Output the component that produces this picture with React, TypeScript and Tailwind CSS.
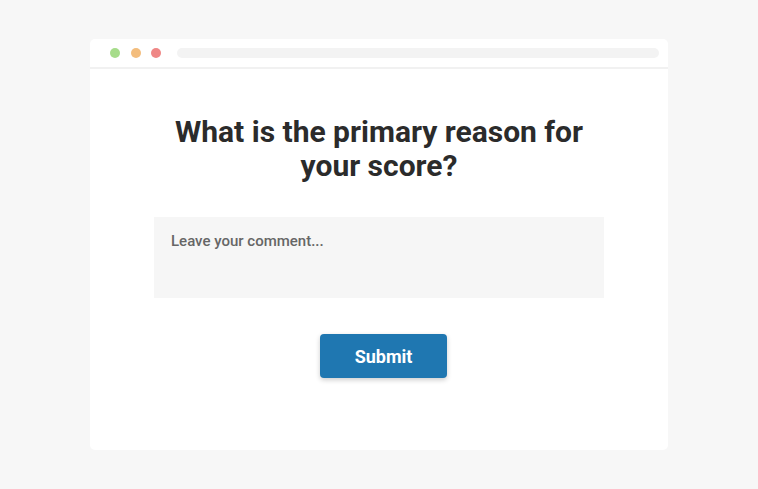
import React from "react";

export default function App() {
  return (
    <div className="w-[758px] h-[489px] bg-[#f7f7f7] pt-[39px] pl-[90px]" style={{ fontFamily: "Roboto, 'Liberation Sans', sans-serif" }}>
      <div className="w-[578px] h-[411px] bg-white rounded-[5px] flex flex-col">
        <div className="h-[30px] border-b-2 border-[#f1f1f1] flex items-center pl-[20px] pr-[9px]">
          <div className="flex gap-[10.5px]">
            <span className="w-[10px] h-[10px] rounded-full bg-[#a6dc8a]" />
            <span className="w-[10px] h-[10px] rounded-full bg-[#f3bd7d]" />
            <span className="w-[10px] h-[10px] rounded-full bg-[#ef8786]" />
          </div>
          <div className="ml-[16px] flex-1 h-[10px] rounded-full bg-[#f3f3f3]" />
        </div>
        <div className="flex flex-col items-center">
          <h1 className="mt-[46px] w-[440px] text-center text-[30px] leading-[34px] font-bold text-[#2b2b2b]">
            What is the primary reason for your score?
          </h1>
          <div className="mt-[34px] w-[450px] h-[81px] bg-[#f6f6f6] px-[17px] pt-[13px] text-[15px] font-medium text-[#666666]">
            Leave your comment...
          </div>
          <button className="mt-[36px] ml-[9px] w-[127px] h-[44px] rounded-[4px] bg-[#1f77b1] text-white text-[18px] font-bold shadow-[0_2px_5px_rgba(0,0,0,0.2)]">
            Submit
          </button>
        </div>
      </div>
    </div>
  );
}
